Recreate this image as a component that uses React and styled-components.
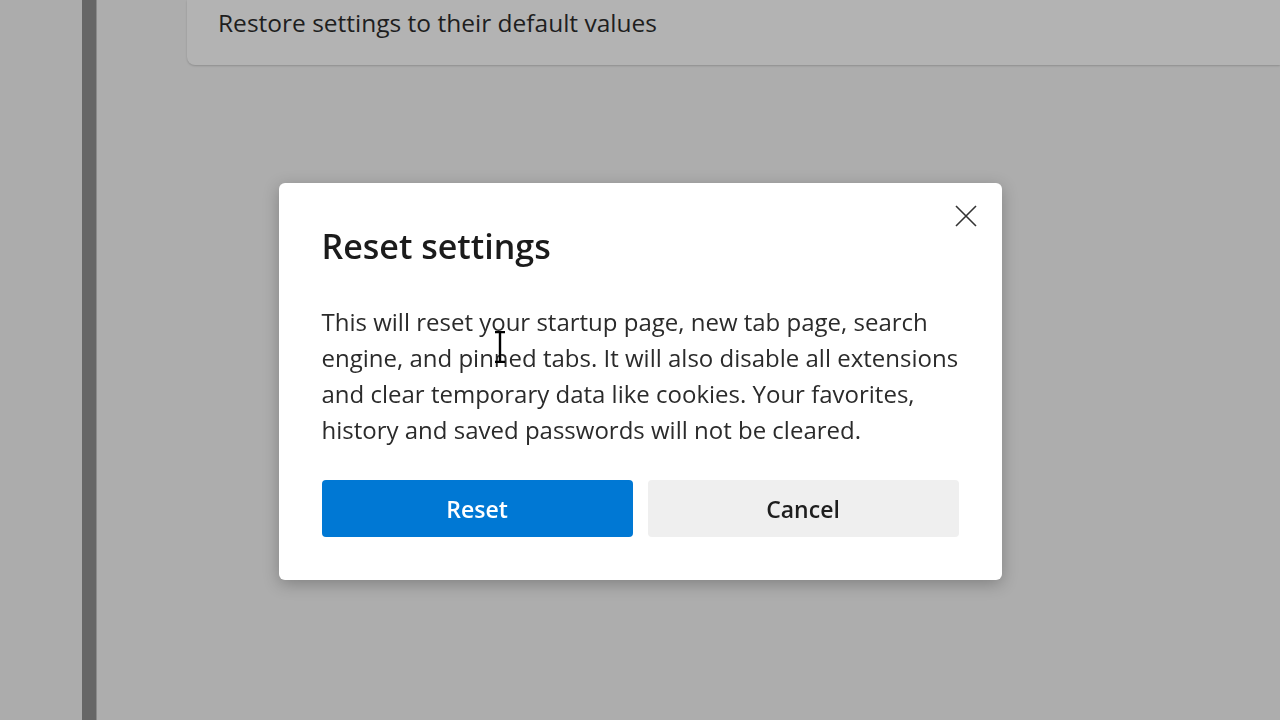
import styled, { createGlobalStyle } from 'styled-components';

const GlobalStyle = createGlobalStyle`
  html, body {
    margin: 0;
    padding: 0;
    height: 100%;
    overflow: hidden;
  }
  body {
    font-family: "Open Sans", "Noto Sans", sans-serif;
    background: #adadad;
  }
`;

const Page = styled.div`
  display: flex;
  height: 720px;
`;

const Gutter = styled.div`
  width: 82px;
  background: #acacac;
`;

const Rail = styled.div`
  width: 14px;
  background: #666666;
  border-right: 1px solid #8a8a8a;
`;

const Main = styled.main`
  flex: 1;
  padding-left: 90px;
  background: #adadad;
`;

const SettingsCard = styled.section`
  height: 65px;
  box-sizing: border-box;
  background: #b3b3b3;
  border-bottom-left-radius: 8px;
  box-shadow: 0 1px 2px rgba(0, 0, 0, 0.18);
  padding: 6px 0 0 31px;
  display: flex;
  align-items: flex-start;
`;

const CardText = styled.span`
  font-size: 24.5px;
  color: #1e1e1e;
`;

const Overlay = styled.div`
  position: fixed;
  inset: 0;
  display: flex;
  justify-content: center;
  align-items: flex-start;
  padding-top: 183px;
`;

const Dialog = styled.div`
  position: relative;
  width: 723px;
  height: 397px;
  box-sizing: border-box;
  background: #ffffff;
  border-radius: 6px;
  box-shadow: 0 4px 16px rgba(0, 0, 0, 0.25);
  padding: 38px 43px 0 43px;
  display: flex;
  flex-direction: column;
`;

const CloseButton = styled.button`
  position: absolute;
  top: 20px;
  right: 23px;
  width: 26px;
  height: 26px;
  padding: 0;
  border: 0;
  background: transparent;
  display: flex;
  align-items: center;
  justify-content: center;
`;

const Title = styled.h2`
  margin: 0;
  font-size: 34px;
  font-weight: 600;
  color: #1b1b1b;
  line-height: 50px;
`;

const Body = styled.p`
  margin: 33px 0 0;
  font-size: 24px;
  line-height: 36px;
  color: #2b2b2b;
`;

const Actions = styled.div`
  display: grid;
  grid-template-columns: 1fr 1fr;
  gap: 15px;
  margin-top: 32px;
`;

const Button = styled.button`
  height: 57px;
  border: 0;
  border-radius: 4px;
  font-family: inherit;
  font-size: 23px;
  font-weight: 600;
  background: ${(p) => (p.$primary ? '#0078d4' : '#efefef')};
  color: ${(p) => (p.$primary ? '#ffffff' : '#1e1e1e')};
`;

const Cursor = styled.svg`
  position: fixed;
  left: 493px;
  top: 331px;
`;

const App = () => (
  <>
    <GlobalStyle />
    <Page>
      <Gutter />
      <Rail />
      <Main>
        <SettingsCard>
          <CardText>Restore settings to their default values</CardText>
        </SettingsCard>
      </Main>
    </Page>
    <Overlay>
      <Dialog role="dialog" aria-labelledby="reset-title">
        <CloseButton aria-label="Close">
          <svg width="24" height="24" viewBox="0 0 24 24">
            <path d="M2 2 L22 22 M22 2 L2 22" stroke="#333" strokeWidth="1.6" fill="none" />
          </svg>
        </CloseButton>
        <Title id="reset-title">Reset settings</Title>
        <Body>
          This will reset your startup page, new tab page, search engine, and pinned tabs. It will
          also disable all extensions and clear temporary data like cookies. Your favorites,
          history and saved passwords will not be cleared.
        </Body>
        <Actions>
          <Button $primary>Reset</Button>
          <Button>Cancel</Button>
        </Actions>
      </Dialog>
    </Overlay>
    <Cursor width="14" height="32" viewBox="0 0 14 32">
      <path d="M2 1 H12 M7 1 V31 M2 31 H12" stroke="#000" strokeWidth="2.4" fill="none" />
    </Cursor>
  </>
);

export default App;
